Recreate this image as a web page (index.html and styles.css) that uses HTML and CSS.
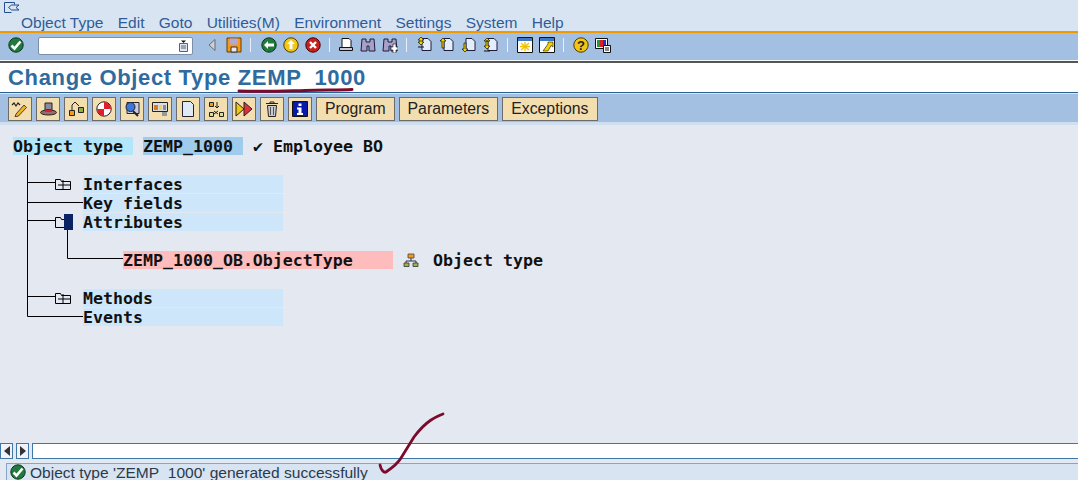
FILE: index.html
```html
<!DOCTYPE html>
<html lang="en">
<head>
    <meta charset="UTF-8">
    <title>Change Object Type ZEMP_1000</title>
    <link rel="stylesheet" href="styles.css">
</head>
<body>
    <svg class="defs" width="0" height="0">
        <symbol id="i-ok" viewBox="0 0 16 16">
            <circle cx="8" cy="8" r="7.2" fill="#1f7a3c" stroke="#10351f"/>
            <path d="M3.5 8.500l3 3 6-7" fill="none" stroke="#fff" stroke-width="2.6"/>
        </symbol>
        <symbol id="i-binoc" viewBox="0 0 16 16">
            <path d="M2 2h4v3h4V2h4l1 12H9V9H7v5H1z" fill="#a9a0c8" stroke="#1c1c3c"/>
        </symbol>
        <symbol id="i-page" viewBox="0 0 16 16">
            <path d="M5 1.500h6l3 3v9H5z" fill="#e4eefa" stroke="#1c1c3c"/>
        </symbol>
        <symbol id="i-folder" viewBox="0 0 16 12">
            <path d="M.5 11.500V1.500h5l1 2h9v8z" fill="none" stroke="#000"/>
        </symbol>
    </svg>

    <div class="menubar">
        <svg class="menu-icon" width="16" height="11" viewBox="0 0 16 11">
            <path d="M.5.500h10v2M.5.500v10h7M.5 10.500" fill="none" stroke="#1f4f8f"/>
            <path d="M4.500 5.500l3-2.500h7.500l-3 2.500 3 2.500H7.500z" fill="#d8e4f2" stroke="#1f4f8f"/>
        </svg>
        <nav class="menu">
            <span>Object Type</span>
            <span>Edit</span>
            <span>Goto</span>
            <span>Utilities(M)</span>
            <span>Environment</span>
            <span>Settings</span>
            <span>System</span>
            <span>Help</span>
        </nav>
    </div>

    <div class="systools">
        <span class="tool"><svg width="16" height="16"><use href="#i-ok"/></svg></span>
        <div class="cmd-field">
            <svg width="9" height="12" viewBox="0 0 9 12"><path d="M2 .5h5L4.500 3z" fill="#111"/><path d="M.5 3.500h8v8h-8z" fill="#dfe8f2" stroke="#56606e"/><path d="M2 6h5M2 8h5" stroke="#56606e"/></svg>
        </div>
        <span class="tool tool-back"><svg width="8" height="12" viewBox="0 0 8 12"><path d="M7 .5v11L1 6z" fill="#c9d2dc" stroke="#6d6d6d"/></svg></span>
        <span class="tool"><svg width="16" height="16" viewBox="0 0 16 16"><path d="M1 1h14v14H1z" fill="#f39a18" stroke="#6b3c00"/><path d="M4 1.500h8v6H4z" fill="#b3a7d6"/><path d="M5 10h6v5H5z" fill="#e8e8f0" stroke="#333"/></svg></span>
        <span class="sep sep-wide"></span>
        <span class="tool"><svg width="16" height="16" viewBox="0 0 16 16"><circle cx="8" cy="8" r="7.200" fill="#1f7a3c" stroke="#10351f"/><path d="M3 8l4-4v2.500h6v3H7V12z" fill="#fff"/></svg></span>
        <span class="tool"><svg width="16" height="16" viewBox="0 0 16 16"><circle cx="8" cy="8" r="7.200" fill="#f3c614" stroke="#4b3a00"/><path d="M8 3l4 4H9.500v5h-3V7H4z" fill="#fff"/></svg></span>
        <span class="tool"><svg width="16" height="16" viewBox="0 0 16 16"><circle cx="8" cy="8" r="7.200" fill="#c81e1e" stroke="#400"/><path d="M5 5l6 6M11 5l-6 6" stroke="#fff" stroke-width="2.400"/></svg></span>
        <span class="sep"></span>
        <span class="tool"><svg width="16" height="16" viewBox="0 0 16 16"><path d="M4 1.500h7l2 2v7H4z" fill="#fff" stroke="#111"/><path d="M1.500 10.500h13v3h-13z" fill="#c8c8d8" stroke="#111"/></svg></span>
        <span class="tool"><svg width="16" height="16"><use href="#i-binoc"/></svg></span>
        <span class="tool"><svg width="16" height="16" viewBox="0 0 16 16"><use href="#i-binoc"/><path d="M11 7h3v3h2v3h-2v3h-3v-3H9v-3h2z" fill="#fff" stroke="#111" stroke-width=".6"/></svg></span>
        <span class="sep sep-wide"></span>
        <span class="tool"><svg width="16" height="16" viewBox="0 0 16 16"><use href="#i-page"/><path d="M4 0l3 3H5v2h2l-3 3-3-3h2V3H1z" fill="#f5d300" stroke="#111" stroke-width=".7"/><path d="M1 10h6" stroke="#111"/></svg></span>
        <span class="tool"><svg width="16" height="16" viewBox="0 0 16 16"><use href="#i-page"/><path d="M4 1l3 3H5v7H3V4H1z" fill="#f5d300" stroke="#111" stroke-width=".7"/></svg></span>
        <span class="tool"><svg width="16" height="16" viewBox="0 0 16 16"><use href="#i-page"/><path d="M3 6h2v6h2l-3 3-3-3h2z" fill="#f5d300" stroke="#111" stroke-width=".7"/></svg></span>
        <span class="tool"><svg width="16" height="16" viewBox="0 0 16 16"><use href="#i-page"/><path d="M4 1l3 3H1zM3 4h2v5h2l-3 3-3-3h2z" fill="#f5d300" stroke="#111" stroke-width=".7"/><path d="M1 14h6" stroke="#111"/></svg></span>
        <span class="sep sep-mid"></span>
        <span class="tool"><svg width="16" height="16" viewBox="0 0 16 16"><path d="M.5.500h15v15H.5z" fill="#fff" stroke="#111"/><path d="M1 1h14v3H1z" fill="#3f78c0"/><path d="M8 5v9M4 6l8 7M12 6l-8 7M3 9.500h10" stroke="#f2c200" stroke-width="1.300"/></svg></span>
        <span class="tool"><svg width="16" height="16" viewBox="0 0 16 16"><path d="M.5.500h15v15H.5z" fill="#fff" stroke="#111"/><path d="M1 1h14v3H1z" fill="#3f78c0"/><path d="M9 5h5v5l-2-1.500-3 5.500H4l5-7z" fill="#f5d300" stroke="#111" stroke-width=".6"/></svg></span>
        <span class="sep sep-mid"></span>
        <span class="tool"><svg width="16" height="16" viewBox="0 0 16 16"><circle cx="8" cy="8" r="7.200" fill="#f3c614" stroke="#4b3a00"/><text class="help-q" x="8" y="12.500">?</text></svg></span>
        <span class="tool"><svg width="16" height="16" viewBox="0 0 16 16"><path d="M.5 1.500h12v10H.5z" fill="#fff" stroke="#111"/><path d="M2 3h3v7H2z" fill="#1b9b3a"/><path d="M5 3h3v7H5z" fill="#d81e1e"/><path d="M8 3h3v7H8z" fill="#2233c8"/><path d="M8.500 8.500h7v7h-7z" fill="#fff" stroke="#111"/><path d="M10 11h4M10 13h4" stroke="#111"/></svg></span>
    </div>

    <h1 class="title">Change Object Type ZEMP<span class="hidden-char">_</span>1000</h1>

    <div class="apptools">
        <button class="btn"><svg width="18" height="16" viewBox="0 0 18 16"><path d="M5 13l8-9 2.500 2.500-8 8.500-3.500 1z" fill="#f3b020" stroke="#222" stroke-width=".8"/><path d="M1 4l2-2 2 3 2-3 2 2" fill="none" stroke="#222" stroke-width="1.200"/></svg></button>
        <button class="btn"><svg width="17" height="16" viewBox="0 0 17 16"><path d="M5 2h7v9H5z" fill="#8a8aa0" stroke="#222"/><path d="M5 8h7v2H5z" fill="#d8202a"/><ellipse cx="8.500" cy="11.500" rx="8" ry="2.500" fill="#9b6a6a" stroke="#222"/><path d="M5 10h7" stroke="#d8202a" stroke-width="2"/></svg></button>
        <button class="btn"><svg width="16" height="16" viewBox="0 0 16 16"><path d="M1.500 9.500h5v5h-5z" fill="#f39a18" stroke="#222"/><path d="M10.500 6.500h5v5h-5z" fill="#8fae3c" stroke="#222"/><path d="M4 9V4l3-3 4 4" fill="none" stroke="#222"/></svg></button>
        <button class="btn"><svg width="16" height="16" viewBox="0 0 16 16"><circle cx="8" cy="8" r="7.200" fill="#fff" stroke="#222"/><path d="M8 1a7 7 0 0 1 7 7H8zM8 8H1a7 7 0 0 0 7 7z" fill="#e01e2c"/></svg></button>
        <button class="btn"><svg width="16" height="16" viewBox="0 0 16 16"><path d="M3 1.500h12v11H3z" fill="#ccd" stroke="#223"/><circle cx="6.500" cy="6" r="4.500" fill="#3d78d8" stroke="#223"/><path d="M9 10l5 5" stroke="#223" stroke-width="2"/></svg></button>
        <button class="btn"><svg width="16" height="16" viewBox="0 0 16 16"><path d="M.5 1.500h15v9H.5z" fill="#ddd" stroke="#222"/><path d="M2 4h4v5H2z" fill="#d77a20"/><path d="M7 4h3v5H7z" fill="#f3d060"/><path d="M11 4h3v5h-3z" fill="#7a8fb0"/><path d="M10 11h5v4h-5z" fill="#999"/></svg></button>
        <button class="btn"><svg width="16" height="16" viewBox="0 0 16 16"><path d="M2.500.500h8l3 3v12h-11z" fill="#dfeaf7" stroke="#223"/></svg></button>
        <button class="btn"><svg width="16" height="16" viewBox="0 0 16 16"><path d="M1.500 1.500h4v4h-4z" fill="#f39a18" stroke="#222"/><path d="M1.500 11.500h4v4h-4zM11.500 11.500h4v4h-4z" fill="#dfe08a" stroke="#222"/><path d="M9 1v6M7 5l2 2 2-2M6 10l4 3M10 10l-4 3" fill="none" stroke="#222"/></svg></button>
        <button class="btn"><svg width="18" height="16" viewBox="0 0 18 16"><path d="M1 1l8 7-8 7z" fill="#f3c614" stroke="#222"/><path d="M9 1l8 7-8 7z" fill="#e0303a" stroke="#222"/></svg></button>
        <button class="btn"><svg width="14" height="16" viewBox="0 0 14 16"><path d="M1 2.500h12M5 2.500V1h4v1.500" fill="none" stroke="#222"/><path d="M2.500 4.500h9l-1 11h-7z" fill="#c9c9d6" stroke="#222"/><path d="M5.500 6v8M8.500 6v8" stroke="#555"/></svg></button>
        <button class="btn"><svg width="16" height="16" viewBox="0 0 16 16"><path d="M.5.500h15v15H.5z" fill="#0a1aa8" stroke="#111"/><path d="M6.500 2.500h3v2.500h-3zM5 6.500h4.500V12H11v2H5v-2h1.500V8.500H5z" fill="#fff"/></svg></button>
        <button class="btn btn-text">Program</button>
        <button class="btn btn-text">Parameters</button>
        <button class="btn btn-text">Exceptions</button>
    </div>
    <div class="stripe"></div>

    <main class="tree">
        <svg class="tree-lines" width="124" height="200" viewBox="0 0 124 200">
            <path d="M27.500 18V179.500H83M27.500 45.500H55M27.500 65.500H83M27.500 83.500H55M27.500 159.500H55M67.500 92V121.500H123" fill="none" stroke="#000"/>
        </svg>
        <div class="row"><span class="cell cell-type">Object type</span><span class="cell cell-name">ZEMP_1000</span><span class="plain">✔ Employee BO</span></div>
        <div class="row"></div>
        <div class="row"><svg class="folder" width="16" height="12"><use href="#i-folder"/><path d="M8 2v9M3 7h12" stroke="#000" fill="none"/></svg><span class="cell cell-node cell-after">Interfaces</span></div>
        <div class="row"><span class="cell cell-node">Key fields</span></div>
        <div class="row"><svg class="folder" width="16" height="12"><use href="#i-folder"/></svg><span class="cursor"></span><span class="cell cell-node cell-after2">Attributes</span></div>
        <div class="row"></div>
        <div class="row"><span class="cell cell-attr">ZEMP_1000_OB.ObjectType</span>
            <svg class="org" width="16" height="14" viewBox="0 0 16 14"><path d="M5 1h6v4H5z" fill="#f39a18" stroke="#444" stroke-width=".8"/><path d="M8 5v3M3 11V8h10v3" fill="none" stroke="#333"/><path d="M1 10h5v3.500H1zM10 10h5v3.500h-5z" fill="#9ab83c" stroke="#333" stroke-width=".8"/></svg>
            <span class="plain">Object type</span></div>
        <div class="row"></div>
        <div class="row"><svg class="folder" width="16" height="12"><use href="#i-folder"/><path d="M8 2v9M3 7h12" stroke="#000" fill="none"/></svg><span class="cell cell-node cell-after">Methods</span></div>
        <div class="row"><span class="cell cell-node">Events</span></div>
    </main>

    <div class="scroller">
        <span class="scroll-btn"><svg width="6" height="10" viewBox="0 0 6 10"><path d="M6 0v10L0 5z" fill="#333"/></svg></span>
        <span class="scroll-btn"><svg width="6" height="10" viewBox="0 0 6 10"><path d="M0 0v10l6-5z" fill="#333"/></svg></span>
        <div class="scroll-track"></div>
    </div>
    <div class="status">
        <svg width="16" height="16"><use href="#i-ok"/></svg>
        <span>Object type 'ZEMP_1000' generated successfully</span>
    </div>

    <!-- pen marks drawn over the screenshot -->
    <svg class="marks" width="1078" height="480" viewBox="0 0 1078 480">
        <path d="M239 91C265 92 285 91 305 90.500S340 90 352 89.500" fill="none" stroke="#7c0a2a" stroke-width="3" stroke-linecap="round"/>
        <path d="M380 465C381 470 384 473 386 472C392 468 398 463 401 458C406 450 409 445 414 437C420 429 425 424 431 420C436 417 440 415 443 414" fill="none" stroke="#7c0a2a" stroke-width="2.800" stroke-linecap="round"/>
    </svg>
</body>
</html>
```

FILE: styles.css
```css
html, body {
    height: 480px;
    overflow: hidden;
}
body {
    margin: 0;
    background-color: #e3e8f1;
    font-family: "Liberation Sans", Arial, sans-serif;
    position: relative;
}
svg {
    display: block;
}
.defs {
    position: absolute;
}
.menubar {
    height: 31px;
    background-color: #d8e4f2;
    box-sizing: border-box;
    padding: 2px 0 0 4px;
}
.menu {
    display: flex;
    gap: 14.3px;
    margin: 1px 0 0 17px;
    font-size: 15.5px;
    line-height: 18px;
    color: #2f5c96;
}
.systools {
    height: 27px;
    border-top: 2px solid #f09a00;
    border-bottom: 1px solid #f4f7fb;
    background-color: #a3c0e2;
    display: flex;
    align-items: center;
    padding-left: 5px;
}
.tool {
    width: 22px;
    display: flex;
    justify-content: center;
    margin-bottom: 3px;
}
.tool-back {
    margin-left: 8px;
}
.sep {
    width: 11px;
    height: 14px;
    flex: none;
    margin-bottom: 3px;
}
.sep::after {
    content: "";
    display: block;
    width: 1px;
    height: 14px;
    margin-left: 5px;
    background-color: #e8eff8;
}
.sep-wide {
    width: 13px;
}
.sep-mid {
    width: 12px;
}
.cmd-field {
    width: 155px;
    height: 18px;
    margin: 0 0 1px 11px;
    box-sizing: border-box;
    background-color: #fff;
    border: 1px solid #7d8fa6;
    border-radius: 2px;
    display: flex;
    align-items: center;
    justify-content: flex-end;
    padding-right: 4px;
}
.help-q {
    font: bold 13px "Liberation Sans", sans-serif;
    text-anchor: middle;
    fill: #222;
}
.title {
    margin: 0;
    height: 29px;
    border-top: 2px solid #555;
    border-bottom: 1px solid #2a6496;
    background-color: #fff;
    padding-left: 8px;
    font-size: 22px;
    line-height: 29px;
    font-weight: bold;
    color: #2f6b9e;
    letter-spacing: 0.66px;
    white-space: nowrap;
}
.hidden-char {
    color: transparent;
}
.apptools {
    height: 29px;
    background-color: #a3c0e2;
    box-sizing: border-box;
    border-top: 1px solid #d8e4f2;
    padding: 3px 0 0 8px;
    display: flex;
    gap: 4px;
}
.btn {
    width: 24px;
    height: 24px;
    padding: 0;
    box-sizing: border-box;
    border: 1px solid #6b6b6b;
    background-color: #f3deb0;
    display: flex;
    align-items: center;
    justify-content: center;
    font-family: inherit;
}
.btn-text {
    width: auto;
    padding: 0 8px;
    font-size: 15.8px;
    color: #222;
}
.stripe {
    height: 3px;
    background-color: #d0dfef;
}
.tree {
    position: relative;
    padding-top: 12px;
    font-family: "DejaVu Sans Mono", monospace;
    font-size: 16.6px;
    font-weight: bold;
    color: #111;
}
.tree-lines {
    position: absolute;
    left: 0;
    top: 12px;
}
.row {
    height: 19px;
    display: flex;
    align-items: flex-start;
    padding-left: 13px;
}
.cell {
    height: 18px;
    line-height: 20px;
    white-space: pre;
    position: relative;
}
.cell-type {
    width: 120px;
    background-color: #b3e5fb;
}
.cell-name {
    width: 100px;
    margin-left: 10px;
    background-color: #9fcbec;
}
.plain {
    line-height: 20px;
    margin-left: 10px;
    white-space: pre;
}
.cell-node {
    width: 200px;
    margin-left: 70px;
    background-color: #cde6fa;
}
.cell-after {
    margin-left: 12px;
}
.cell-after2 {
    margin-left: 10px;
}
.folder {
    margin: 3px 0 0 42px;
    position: relative;
}
.cursor {
    width: 9px;
    height: 16px;
    margin: 1px 0 0 -7px;
    background-color: #0b2265;
    position: relative;
}
.cell-attr {
    width: 270px;
    margin-left: 110px;
    background-color: #ffbcbc;
}
.org {
    margin: 2px 4px 0 10px;
}
.scroller {
    position: absolute;
    left: 0;
    right: 0;
    top: 443px;
    height: 16px;
    display: flex;
    gap: 3px;
}
.scroll-btn {
    width: 13px;
    box-sizing: border-box;
    background-color: #f0f4fa;
    border: 1px solid #3f78a8;
    display: flex;
    align-items: center;
    justify-content: center;
}
.scroll-track {
    flex: 1;
    background-color: #fff;
    border: 1px solid #3f78a8;
    border-right: none;
}
.status {
    position: absolute;
    left: 6px;
    right: 0;
    top: 463px;
    height: 17px;
    box-sizing: border-box;
    background-color: #d8e4f2;
    border-top: 1px solid #87a5c8;
    border-left: 1px solid #87a5c8;
    padding-left: 3px;
    display: flex;
    gap: 4px;
    font-size: 15.55px;
    line-height: 18px;
    color: #2a3a4a;
    white-space: nowrap;
}
.marks {
    position: absolute;
    left: 0;
    top: 0;
    pointer-events: none;
}
```
